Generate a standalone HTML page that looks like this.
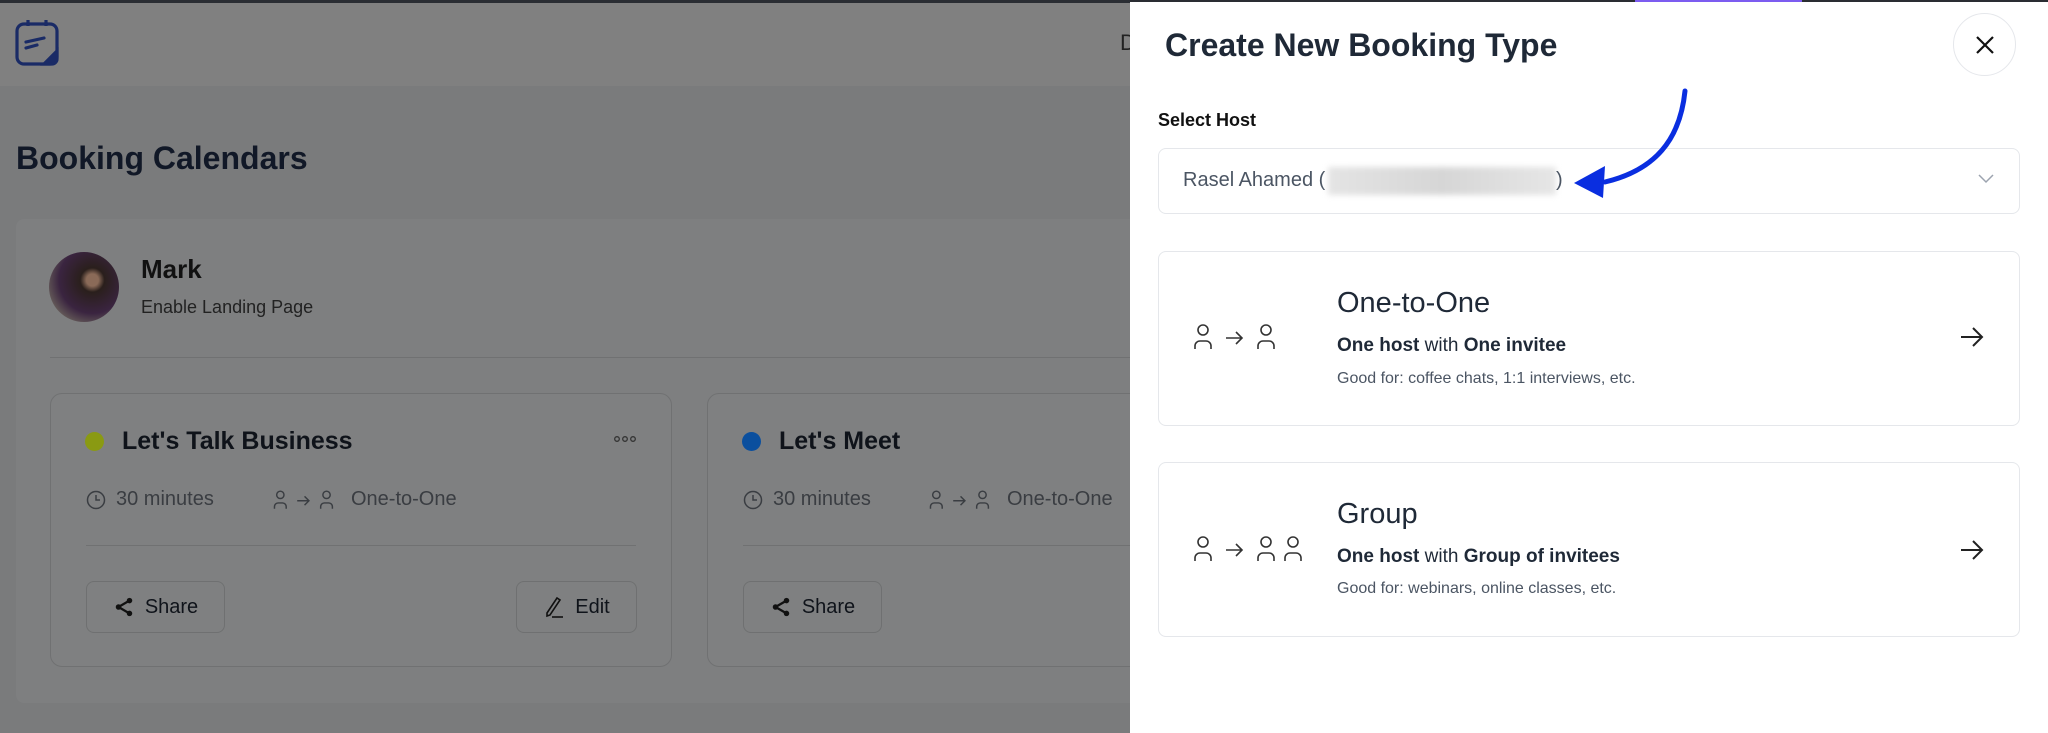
<!DOCTYPE html>
<html><head><meta charset="utf-8"><style>
*{box-sizing:border-box;margin:0;padding:0}
body{width:2048px;height:733px;overflow:hidden;font-family:"Liberation Sans",sans-serif;background:#7a7b7c;position:relative;color:#0f131a}
.abs{position:absolute}
.hdr{left:0;top:0;width:1130px;height:86px;background:#808080;border-top:3px solid #2a2d33}
.card{left:16px;top:219px;width:1200px;height:484px;background:#7e7f80;border-radius:8px}
.ev{border:1.5px solid #707172;border-radius:12px;background:#7f8081}
.btn{border:1.5px solid #6f7071;border-radius:8px;font-size:20px;display:flex;align-items:center;justify-content:center;gap:10px}
.meta{font-size:20px;color:#3a3d42;display:flex;align-items:center;gap:10px}
.panel{left:1130px;top:0;width:918px;height:733px;background:#fff}
.opt{left:1158px;width:862px;height:175px;border:1.5px solid #e5e7eb;border-radius:8px}
</style></head><body>
<div class="abs hdr"></div>
<svg class="abs" style="left:14px;top:20px" width="48" height="48" viewBox="0 0 48 48" fill="none" stroke="#1a2b66" stroke-width="3.2"><rect x="3" y="4" width="40" height="40" rx="7"/><line x1="14" y1="0" x2="14" y2="6"/><line x1="32" y1="0" x2="32" y2="6"/><path d="M12 22l18-4M12 28l11-3" stroke-linecap="round"/><path d="M30 44l13-13v8a5 5 0 0 1-5 5z" fill="#1a2b66"/></svg>
<div class="abs" style="left:1120px;top:30px;font-size:22px;color:#222">D</div>
<div class="abs" style="left:16px;top:140px;font-size:32px;font-weight:bold;color:#111827">Booking Calendars</div>
<div class="abs card"></div>
<div class="abs" style="left:49px;top:252px;width:70px;height:70px;border-radius:50%;background:radial-gradient(circle at 62% 40%,#8a6a58 0 10%,#2a1f1c 20%,#3a2440 55%,#6a625c 80%,#4a4442)"></div>
<div class="abs" style="left:141px;top:254px;font-size:26px;font-weight:bold;color:#111">Mark</div>
<div class="abs" style="left:141px;top:297px;font-size:18px;color:#222">Enable Landing Page</div>
<div class="abs" style="left:50px;top:357px;width:1080px;height:1px;background:#707172"></div>

<div class="abs ev" style="left:50px;top:393px;width:622px;height:274px"></div>
<div class="abs ev" style="left:707px;top:393px;width:500px;height:274px"></div>
<div class="abs" style="left:85px;top:432px;width:19px;height:19px;border-radius:50%;background:#8a9a12"></div>
<div class="abs" style="left:122px;top:427px;font-size:25px;font-weight:bold">Let's Talk Business</div>
<svg class="abs" style="left:614px;top:435px" width="22" height="8" viewBox="0 0 22 8" fill="none" stroke="#333" stroke-width="1.3"><circle cx="3" cy="4" r="2.3"/><circle cx="11" cy="4" r="2.3"/><circle cx="19" cy="4" r="2.3"/></svg>
<div class="abs" style="left:742px;top:432px;width:19px;height:19px;border-radius:50%;background:#0b4f9e"></div>
<div class="abs" style="left:779px;top:427px;font-size:25px;font-weight:bold">Let's Meet</div>

<div class="abs meta" style="left:86px;top:488px"><svg width="20" height="20" viewBox="0 0 20 20" fill="none" stroke="#3a3d42" stroke-width="1.5"><circle cx="10" cy="10" r="8.5"/><path d="M10 5v5h4"/></svg>30 minutes</div>
<div class="abs meta" style="left:271px;top:488px"><svg width="70" height="22" viewBox="0 0 90 30" fill="none" stroke="#3a3d42" stroke-width="2"><circle cx="10" cy="8" r="5"/><path d="M2 27v-3a5 5 0 0 1 5-5h6a5 5 0 0 1 5 5v3"/><path d="M33 16h16M43 10l6 6-6 6"/><circle cx="73" cy="8" r="5"/><path d="M65 27v-3a5 5 0 0 1 5-5h6a5 5 0 0 1 5 5v3"/></svg>One-to-One</div>
<div class="abs meta" style="left:743px;top:488px"><svg width="20" height="20" viewBox="0 0 20 20" fill="none" stroke="#3a3d42" stroke-width="1.5"><circle cx="10" cy="10" r="8.5"/><path d="M10 5v5h4"/></svg>30 minutes</div>
<div class="abs meta" style="left:927px;top:488px"><svg width="70" height="22" viewBox="0 0 90 30" fill="none" stroke="#3a3d42" stroke-width="2"><circle cx="10" cy="8" r="5"/><path d="M2 27v-3a5 5 0 0 1 5-5h6a5 5 0 0 1 5 5v3"/><path d="M33 16h16M43 10l6 6-6 6"/><circle cx="73" cy="8" r="5"/><path d="M65 27v-3a5 5 0 0 1 5-5h6a5 5 0 0 1 5 5v3"/></svg>One-to-One</div>
<div class="abs" style="left:86px;top:545px;width:550px;height:1px;background:#707172"></div>
<div class="abs" style="left:743px;top:545px;width:400px;height:1px;background:#707172"></div>
<div class="abs btn" style="left:86px;top:581px;width:139px;height:52px"><svg width="22" height="22" viewBox="0 0 24 24" fill="#111"><circle cx="18" cy="5" r="3"/><circle cx="6" cy="12" r="3"/><circle cx="18" cy="19" r="3"/><path d="M6 12L18 5M6 12l12 7" stroke="#111" stroke-width="2.5"/></svg>Share</div>
<div class="abs btn" style="left:516px;top:581px;width:121px;height:52px"><svg width="22" height="24" viewBox="0 0 22 24" fill="none" stroke="#111" stroke-width="1.6"><path d="M4 18L14 3l3 2L7 20l-3 1z"/><path d="M9 22h11"/></svg>Edit</div>
<div class="abs btn" style="left:743px;top:581px;width:139px;height:52px"><svg width="22" height="22" viewBox="0 0 24 24" fill="#111"><circle cx="18" cy="5" r="3"/><circle cx="6" cy="12" r="3"/><circle cx="18" cy="19" r="3"/><path d="M6 12L18 5M6 12l12 7" stroke="#111" stroke-width="2.5"/></svg>Share</div>

<div class="abs panel"></div>
<div class="abs" style="left:1130px;top:0;width:918px;height:2px;background:#2a2d33"></div>
<div class="abs" style="left:1635px;top:0;width:167px;height:2px;background:#7c5cf0"></div>
<div class="abs" style="left:1165px;top:27px;font-size:32px;font-weight:bold;color:#1f2937">Create New Booking Type</div>
<div class="abs" style="left:1953px;top:13px;width:63px;height:63px;border-radius:50%;border:1.5px solid #e5e7eb"></div>
<svg class="abs" style="left:1974px;top:34px" width="22" height="22" viewBox="0 0 22 22" stroke="#111" stroke-width="2.2"><path d="M3 3l16 16M19 3L3 19"/></svg>
<div class="abs" style="left:1158px;top:110px;font-size:18px;font-weight:bold;color:#111">Select Host</div>
<div class="abs" style="left:1158px;top:148px;width:862px;height:66px;border:1.5px solid #e5e7eb;border-radius:8px"></div>
<div class="abs" style="left:1183px;top:169px;font-size:20px;color:#4b5563">Rasel Ahamed (</div>
<div class="abs" style="left:1328px;top:167px;width:228px;height:28px;background:linear-gradient(90deg,#e4e4e4,#d6d6d6,#e6e6e6);filter:blur(3px)"></div>
<div class="abs" style="left:1556px;top:169px;font-size:20px;color:#4b5563">)</div>
<svg class="abs" style="left:1978px;top:174px" width="16" height="10" viewBox="0 0 16 10" fill="none" stroke="#9ca3af" stroke-width="1.5"><path d="M1 1l7 7 7-7"/></svg>
<svg class="abs" style="left:1560px;top:80px" width="140" height="120" viewBox="0 0 140 120" fill="none"><path d="M125 11C120 60 95 90 45 102" stroke="#0a2ee0" stroke-width="5" stroke-linecap="round"/><path d="M14 103L45 86L43 118Z" fill="#0a2ee0"/></svg>

<div class="abs opt" style="top:251px"></div>
<div class="abs opt" style="top:462px"></div>
<svg class="abs" style="left:1193px;top:322px" width="90" height="30" viewBox="0 0 90 30" fill="none" stroke="#333" stroke-width="1.6"><circle cx="10" cy="8" r="5"/><path d="M2 27v-3a5 5 0 0 1 5-5h6a5 5 0 0 1 5 5v3"/><path d="M33 16h16M43 10l6 6-6 6"/><circle cx="73" cy="8" r="5"/><path d="M65 27v-3a5 5 0 0 1 5-5h6a5 5 0 0 1 5 5v3"/></svg>
<svg class="abs" style="left:1193px;top:534px" width="120" height="30" viewBox="0 0 120 30" fill="none" stroke="#333" stroke-width="1.6"><circle cx="10" cy="8" r="5"/><path d="M2 27v-3a5 5 0 0 1 5-5h6a5 5 0 0 1 5 5v3"/><path d="M33 16h16M43 10l6 6-6 6"/><circle cx="73" cy="8" r="5"/><path d="M65 27v-3a5 5 0 0 1 5-5h6a5 5 0 0 1 5 5v3"/><circle cx="100" cy="8" r="5"/><path d="M92 27v-3a5 5 0 0 1 5-5h6a5 5 0 0 1 5 5v3"/></svg>
<div class="abs" style="left:1337px;top:287px;font-size:29px;color:#1f2937">One-to-One</div>
<div class="abs" style="left:1337px;top:335px;font-size:19px;color:#1f2937"><b>One host</b> with <b>One invitee</b></div>
<div class="abs" style="left:1337px;top:370px;font-size:16px;color:#4b5563">Good for: coffee chats, 1:1 interviews, etc.</div>
<div class="abs" style="left:1337px;top:498px;font-size:29px;color:#1f2937">Group</div>
<div class="abs" style="left:1337px;top:546px;font-size:19px;color:#1f2937"><b>One host</b> with <b>Group of invitees</b></div>
<div class="abs" style="left:1337px;top:580px;font-size:16px;color:#4b5563">Good for: webinars, online classes, etc.</div>
<svg class="abs" style="left:1960px;top:326px" width="24" height="22" viewBox="0 0 24 22" fill="none" stroke="#222" stroke-width="2"><path d="M1 11h21M13 2l9 9-9 9"/></svg>
<svg class="abs" style="left:1960px;top:539px" width="24" height="22" viewBox="0 0 24 22" fill="none" stroke="#222" stroke-width="2"><path d="M1 11h21M13 2l9 9-9 9"/></svg>
</body></html>
